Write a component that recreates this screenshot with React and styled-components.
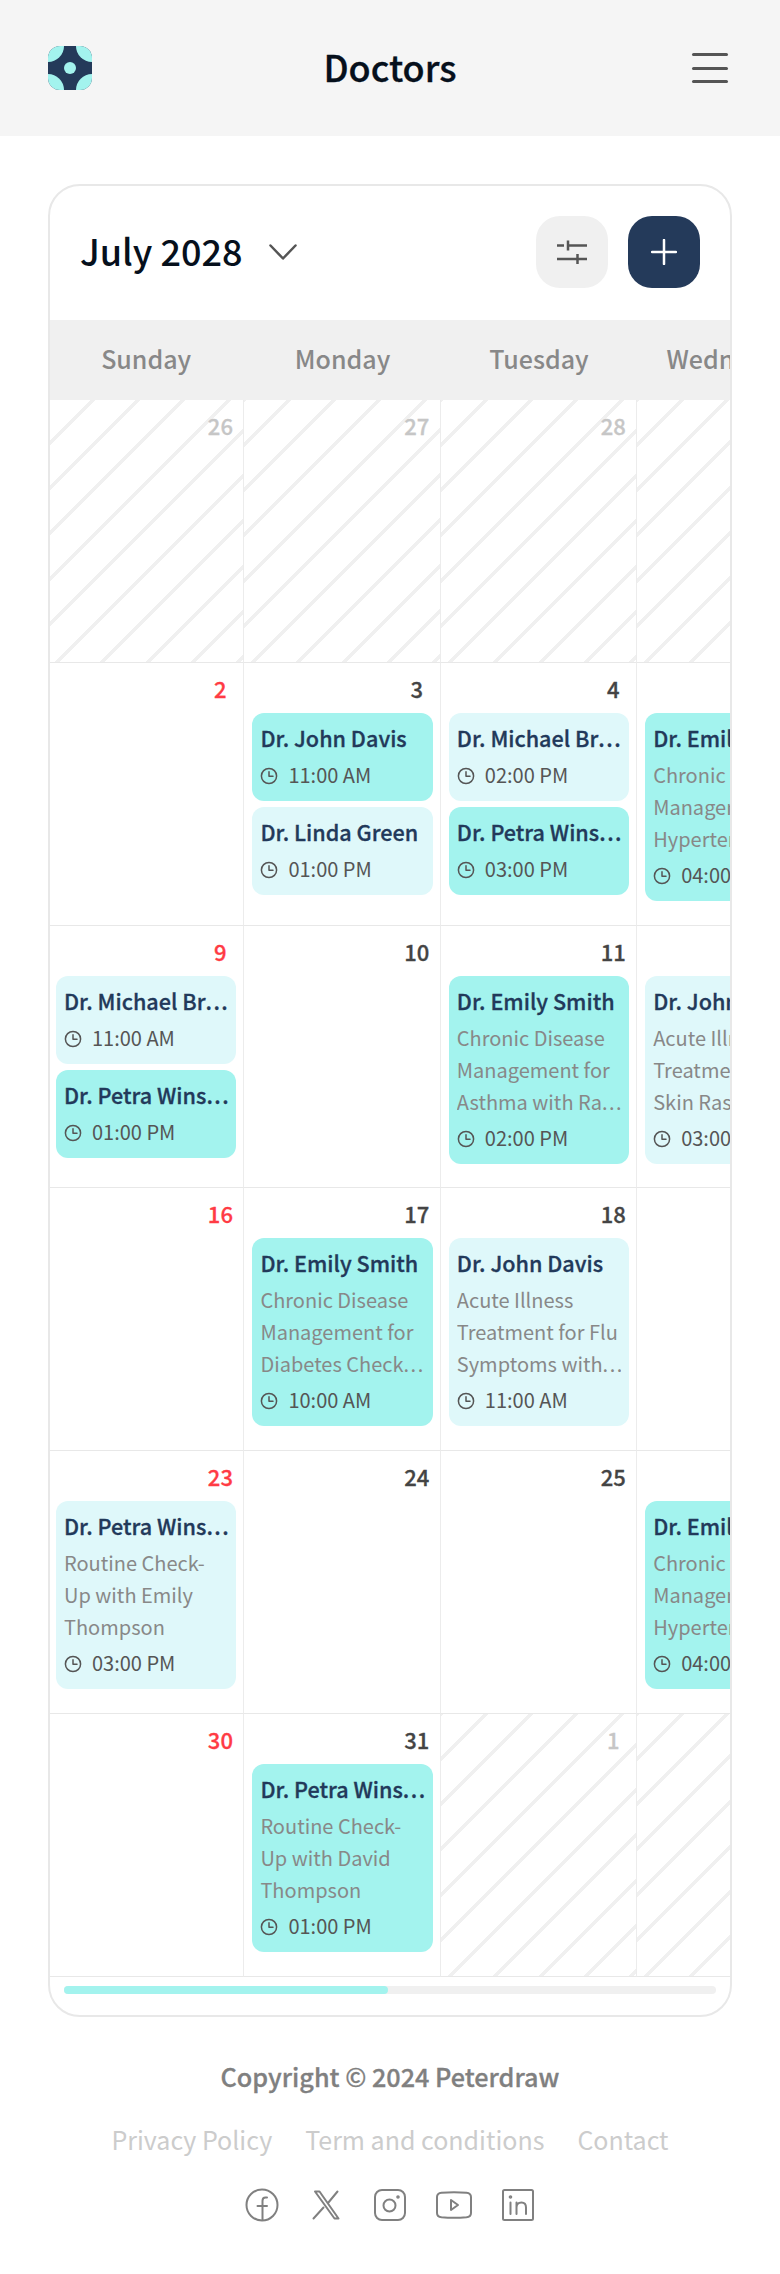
import React from "react";
import styled, { createGlobalStyle } from "styled-components";

const GlobalStyle = createGlobalStyle`
  * {
    box-sizing: border-box;
  }

  body {
    margin: 0;
    background: #fff;
    font-family: "Noto Sans CJK KR", "Noto Sans", sans-serif;
  }
`;

const Header = styled.header`
  display: grid;
  grid-template-columns: 1fr auto 1fr;
  align-items: center;
  height: 136px;
  padding: 0 48px;
  background: #f5f5f5;
`;

const Logo = styled.svg`
  display: block;
  width: 44px;
  height: 44px;
`;

const PageTitle = styled.h1`
  margin: 0;
  padding-bottom: 5px;
  font-size: 36px;
  line-height: 44px;
  font-weight: 500;
  -webkit-text-stroke: 0.3px currentColor;
  color: #06101c;
`;

const MenuButton = styled.div`
  justify-self: end;
  display: flex;
  flex-direction: column;
  align-items: center;
  gap: 10.5px;
  width: 44px;

  span {
    display: block;
    width: 36px;
    height: 3px;
    border-radius: 2px;
    background: #555;
  }
`;

const Main = styled.main`
  padding: 48px 48px 0;
`;

const Card = styled.section`
  border: 2px solid #e8e8e8;
  border-radius: 32px;
  overflow: hidden;
  background: #fff;
`;

const Toolbar = styled.div`
  display: flex;
  align-items: center;
  justify-content: space-between;
  height: 134px;
  padding: 0 30px 2px;
`;

const MonthPicker = styled.div`
  display: flex;
  align-items: center;
  gap: 26px;
`;

const Month = styled.h2`
  margin: 0;
  padding-bottom: 4px;
  font-size: 36px;
  line-height: 48px;
  font-weight: 500;
  color: #06101c;
`;

const Actions = styled.div`
  display: flex;
  gap: 20px;
`;

const ActionButton = styled.div`
  display: flex;
  align-items: center;
  justify-content: center;
  width: 72px;
  height: 72px;
  border-radius: 24px;
  background: ${(p) => (p.$primary ? "#243a5a" : "#f0f0f0")};
`;

const Scroller = styled.div`
  overflow: hidden;
`;

const Calendar = styled.div`
  width: max-content;
  margin-left: -2px;
`;

const WeekRow = styled.div`
  display: grid;
  grid-template-columns: repeat(7, 196.4px);
`;

const WeekDay = styled.div`
  display: flex;
  align-items: center;
  justify-content: center;
  height: 80px;
  padding-bottom: 4px;
  background: #f0f0f0;
  font-size: 25px;
  font-weight: 500;
  color: #888;
`;

const Grid = styled.div`
  display: grid;
  grid-template-columns: repeat(7, 196.4px);
  grid-auto-rows: 262.8px;
`;

const Cell = styled.div`
  display: flex;
  flex-direction: column;
  gap: 6px;
  padding: 8px 7px 0 8px;
  border-right: 1.5px solid #ececec;
  border-bottom: 1.5px solid #e8e8e8;
  background: ${(p) =>
    p.$hatched
      ? "repeating-linear-gradient(135deg, #f0f0f0 0 1.5px, transparent 1.5px 30px, #f0f0f0 30px 32px)"
      : "transparent"};
`;

const DayNumber = styled.div`
  align-self: flex-end;
  width: 32px;
  height: 36px;
  white-space: nowrap;
  text-align: center;
  font-size: 22px;
  line-height: 34px;
  font-weight: 500;
  -webkit-text-stroke: 0.3px currentColor;
  color: ${(p) => p.$color};
`;

const Event = styled.div`
  padding: 7px 8px 10px;
  border-radius: 12px;
  background: ${(p) => (p.$strong ? "#a3f3ee" : "#dff8fa")};
`;

const DoctorName = styled.div`
  margin-bottom: 3px;
  overflow: hidden;
  white-space: nowrap;
  font-size: 21.6px;
  line-height: 36px;
  font-weight: 500;
  -webkit-text-stroke: 0.3px currentColor;
  color: #22395a;
`;

const Description = styled.div`
  height: 96px;
  margin-bottom: 4px;
  overflow: hidden;
  white-space: pre;
  font-size: 20px;
  line-height: 32px;
  color: #888;
`;

const Dots = styled.span`
  letter-spacing: 1.5px;
`;

const Time = styled.div`
  display: flex;
  align-items: center;
  gap: 10px;
  font-size: 20px;
  line-height: 32px;
  white-space: nowrap;
  color: #555;

  svg {
    flex: none;
    width: 18px;
    height: 18px;
    margin-top: 2px;
  }
`;

const Track = styled.div`
  height: 8px;
  margin: 9px 14px 21px 14px;
  border-radius: 4px;
  background: #f0f0f0;
`;

const Thumb = styled.div`
  width: 324px;
  height: 100%;
  border-radius: 4px;
  background: #a3f3ee;
`;

const Footer = styled.footer`
  display: flex;
  flex-direction: column;
  align-items: center;
  padding: 41px 0 53px;
`;

const Copyright = styled.div`
  font-size: 25.2px;
  line-height: 36px;
  font-weight: 500;
  -webkit-text-stroke: 0.3px currentColor;
  color: #808080;
`;

const Links = styled.nav`
  display: flex;
  gap: 33px;
  margin-top: 27px;
  font-size: 25px;
  line-height: 36px;
  color: #ccc;
`;

const Socials = styled.div`
  display: flex;
  gap: 32px;
  margin-top: 32px;

  svg {
    display: block;
    width: 32px;
    height: 32px;
    overflow: visible;
    fill: none;
    stroke: #808080;
    stroke-width: 2;
    stroke-linecap: round;
    stroke-linejoin: round;
  }
`;

const ClockIcon = () => (
  <svg viewBox="0 0 18 18" fill="none" stroke="#555" strokeWidth="1.5" strokeLinecap="round" strokeLinejoin="round">
    <circle cx="9" cy="9" r="7.6" />
    <path d="M9 4.8V9.3H13" />
  </svg>
);

const LogoMark = () => (
  <Logo viewBox="0 0 44 44">
    <rect width="44" height="44" rx="12" fill="#243a5a" />
    <path d="M16 0H12A12 12 0 0 0 0 12V16A16 16 0 0 0 16 0Z" fill="#a3f3ee" />
    <path d="M28 0H32A12 12 0 0 1 44 12V16A16 16 0 0 1 28 0Z" fill="#a3f3ee" />
    <path d="M16 44H12A12 12 0 0 1 0 32V28A16 16 0 0 1 16 44Z" fill="#a3f3ee" />
    <path d="M28 44H32A12 12 0 0 0 44 32V28A16 16 0 0 0 28 44Z" fill="#a3f3ee" />
    <circle cx="22" cy="22" r="6" fill="#a3f3ee" />
  </Logo>
);

const ChevronIcon = () => (
  <svg width="28" height="16" viewBox="0 0 28 16" fill="none" stroke="#555" strokeWidth="2.5" strokeLinecap="round" strokeLinejoin="round">
    <path d="M1.5 1.5L14 14.5L26.5 1.5" />
  </svg>
);

const FilterIcon = () => (
  <svg width="30" height="24" viewBox="0 0 30 24" fill="none" stroke="#555" strokeWidth="2.5">
    <path d="M0 5.5H7M11 5.5H30M11 0.5V10.5M0 19H20M20.5 14V24M20.5 19H30" />
  </svg>
);

const PlusIcon = () => (
  <svg width="26" height="26" viewBox="0 0 26 26" fill="none" stroke="#fff" strokeWidth="2.5" strokeLinecap="round">
    <path d="M13 1V25M1 13H25" />
  </svg>
);

const SOCIALS = [
  <>
    <circle cx="16" cy="16" r="15.5" />
    <path d="M21 8.5H19.5C17.5 8.5 16.5 9.8 16.5 11.8V31M11.5 17H21" />
  </>,
  <path d="M5 2.5L24.5 29.5H28.5L9.5 2.5ZM27.5 2.5L18 14M13.5 18.5L3.5 29.5" />,
  <>
    <rect x="1" y="1" width="30" height="30" rx="7" />
    <circle cx="15.5" cy="16.5" r="6" />
    <circle cx="24" cy="8" r="0.8" />
  </>,
  <>
    <path d="M-1 8C-1 5.5 1 4 3.5 3.7C12 3 20 3 28.5 3.7C31 4 33 5.5 33 8V24C33 26.5 31 28 28.5 28.3C20 29 12 29 3.5 28.3C1 28 -1 26.5 -1 24Z" />
    <path d="M13 11L20 16L13 21Z" />
  </>,
  <>
    <rect x="1" y="1" width="30" height="30" rx="1.5" />
    <path d="M8.5 13.5V25M14.5 25V13.5M14.5 18.5C14.5 15.5 16.5 13.5 19.5 13.5C22.5 13.5 24 15.5 24 18.5V25" />
    <circle cx="8.5" cy="8" r="0.8" />
  </>,
];

const WEEKDAYS = ["Sunday", "Monday", "Tuesday", "Wednesday", "Thursday", "Friday", "Saturday"];

const PETRA = "Dr. Petra Wins...";
const MICHAEL = "Dr. Michael Br...";
const petra = (desc, time, strong = true) => ({ name: PETRA, desc, time, strong });
const emily = (desc, time) => ({ name: "Dr. Emily Smith", desc, time, strong: true });
const john = (desc, time, strong = false) => ({ name: "Dr. John Davis", desc, time, strong });
const michael = (time) => ({ name: MICHAEL, time });
const hypertension = "Chronic Disease\nManagement for\nHypertension...";

const WEEKS = [
  [
    { day: 26, hatched: true },
    { day: 27, hatched: true },
    { day: 28, hatched: true },
    { day: 29, hatched: true },
    { day: 30, hatched: true },
    { day: 30, hatched: true },
    { day: 1 },
  ],
  [
    { day: 2 },
    { day: 3, events: [john(null, "11:00 AM", true), { name: "Dr. Linda Green", time: "01:00 PM" }] },
    { day: 4, events: [michael("02:00 PM"), petra(null, "03:00 PM")] },
    { day: 5, events: [emily(hypertension, "04:00 PM")] },
    { day: 6 },
    { day: 7 },
    { day: 8 },
  ],
  [
    { day: 9, events: [michael("11:00 AM"), petra(null, "01:00 PM")] },
    { day: 10 },
    { day: 11, events: [emily("Chronic Disease\nManagement for\nAsthma with Ra...", "02:00 PM")] },
    { day: 12, events: [john("Acute Illness\nTreatment for\nSkin Rash...", "03:00 PM")] },
    { day: 13 },
    { day: 14 },
    { day: 15 },
  ],
  [
    { day: 16 },
    { day: 17, events: [emily("Chronic Disease\nManagement for\nDiabetes Check...", "10:00 AM")] },
    { day: 18, events: [john("Acute Illness\nTreatment for Flu\nSymptoms with...", "11:00 AM")] },
    { day: 19 },
    { day: 20 },
    { day: 21 },
    { day: 22 },
  ],
  [
    { day: 23, events: [petra("Routine Check-\nUp with Emily\nThompson", "03:00 PM", false)] },
    { day: 24 },
    { day: 25 },
    { day: 26, events: [emily(hypertension, "04:00 PM")] },
    { day: 27 },
    { day: 28 },
    { day: 29 },
  ],
  [
    { day: 30 },
    { day: 31, events: [petra("Routine Check-\nUp with David\nThompson", "01:00 PM")] },
    { day: 1, hatched: true },
    { day: 2, hatched: true },
    { day: 3, hatched: true },
    { day: 4, hatched: true },
    { day: 5, hatched: true },
  ],
];

const dayColor = (cell, column) => {
  if (cell.hatched) return "#c6c6c6";
  return column === 0 ? "#ff3b44" : "#444";
};

// the CJK font centres its own ellipsis glyph, so cut strings carry plain dots
const Clipped = ({ text }) =>
  text.endsWith("...") ? (
    <>
      {text.slice(0, -3)}
      <Dots>...</Dots>
    </>
  ) : (
    text
  );

const App = () => {
  return (
    <>
      <GlobalStyle />
      <Header>
        <LogoMark />
        <PageTitle>Doctors</PageTitle>
        <MenuButton>
          <span />
          <span />
          <span />
        </MenuButton>
      </Header>
      <Main>
        <Card>
          <Toolbar>
            <MonthPicker>
              <Month>July 2028</Month>
              <ChevronIcon />
            </MonthPicker>
            <Actions>
              <ActionButton>
                <FilterIcon />
              </ActionButton>
              <ActionButton $primary>
                <PlusIcon />
              </ActionButton>
            </Actions>
          </Toolbar>
          <Scroller>
            <Calendar>
              <WeekRow>
                {WEEKDAYS.map((name) => (
                  <WeekDay key={name}>{name}</WeekDay>
                ))}
              </WeekRow>
              <Grid>
                {WEEKS.map((week, w) =>
                  week.map((cell, c) => (
                    <Cell key={`${w}-${c}`} $hatched={cell.hatched}>
                      <DayNumber $color={dayColor(cell, c)}>{cell.day}</DayNumber>
                      {(cell.events || []).map((event) => (
                        <Event key={event.name + event.time} $strong={event.strong}>
                          <DoctorName>
                            <Clipped text={event.name} />
                          </DoctorName>
                          {event.desc && (
                            <Description>
                              <Clipped text={event.desc} />
                            </Description>
                          )}
                          <Time>
                            <ClockIcon />
                            {event.time}
                          </Time>
                        </Event>
                      ))}
                    </Cell>
                  ))
                )}
              </Grid>
            </Calendar>
          </Scroller>
          <Track>
            <Thumb />
          </Track>
        </Card>
      </Main>
      <Footer>
        <Copyright>Copyright © 2024 Peterdraw</Copyright>
        <Links>
          <span>Privacy Policy</span>
          <span>Term and conditions</span>
          <span>Contact</span>
        </Links>
        <Socials>
          {SOCIALS.map((icon, i) => (
            <svg key={i} viewBox="0 0 32 32">
              {icon}
            </svg>
          ))}
        </Socials>
      </Footer>
    </>
  );
};

export default App;
